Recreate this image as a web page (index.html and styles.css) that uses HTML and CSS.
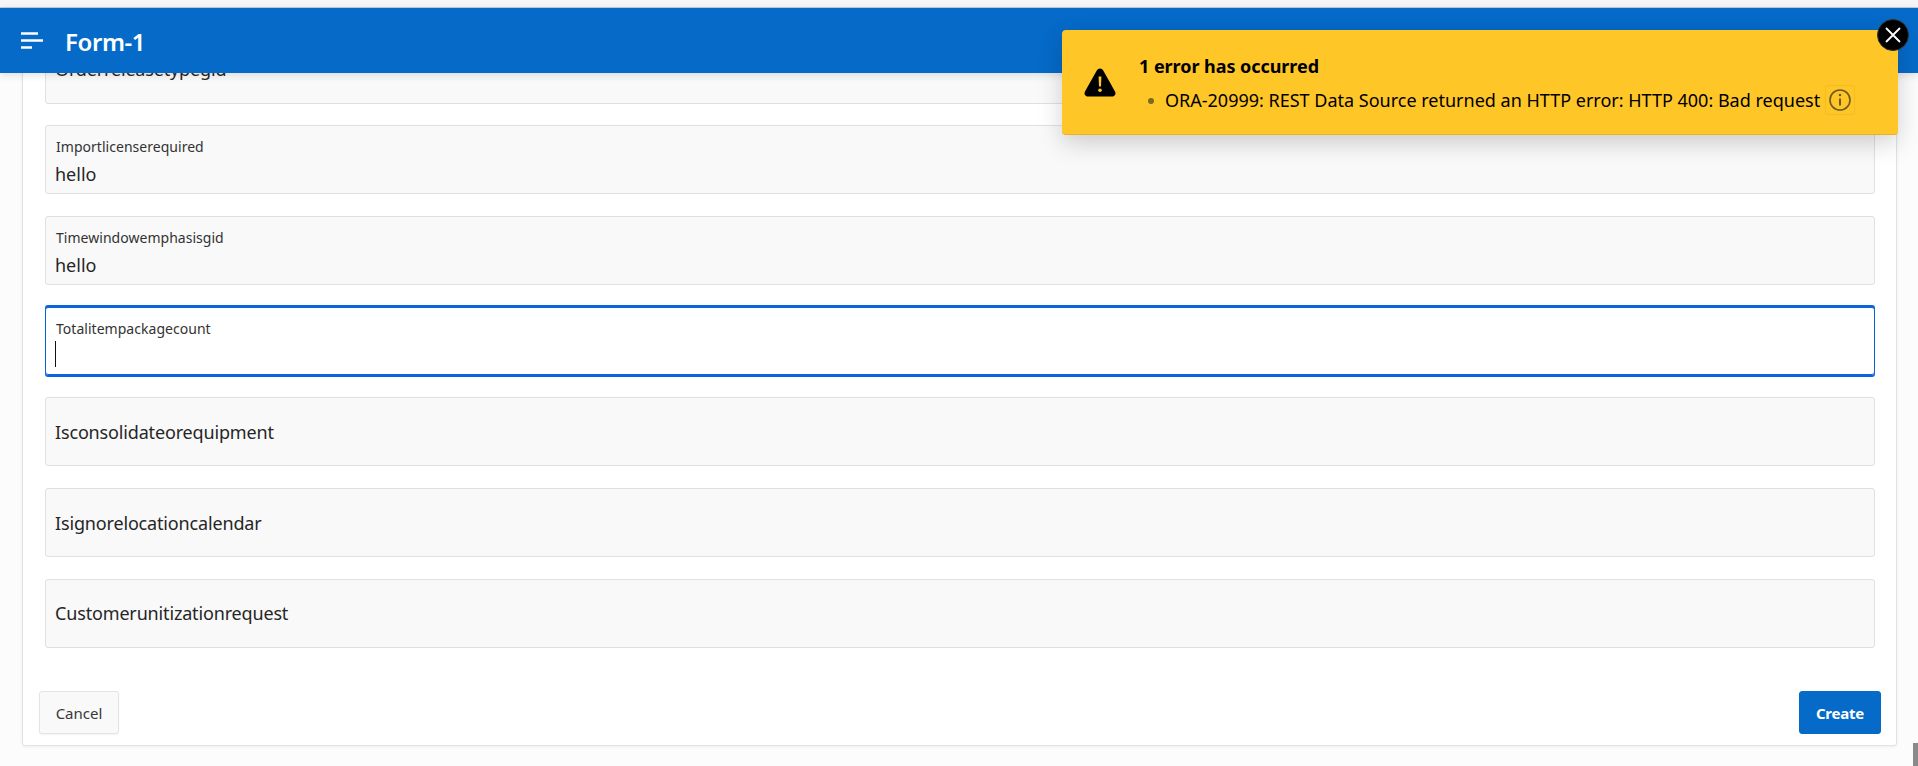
FILE: index.html
```html
<!DOCTYPE html>
<html lang="en">
<head>
<meta charset="utf-8">
<title>Form-1</title>
<link rel="stylesheet" href="styles.css">
</head>
<body>
<div class="strip"></div>
<header class="header">
  <svg class="menu" width="22" height="17" viewBox="0 0 22 17"><path d="M0 1.5h17M0 8.5h22M0 15.500h11" stroke="#fff" stroke-width="2.400" fill="none"/></svg>
  <h1 class="title">Form-1</h1>
</header>
<main class="main">
  <section class="card">
    <div class="fields">
      <div class="field field-empty"><span class="placeholder">Orderreleasetypegid</span></div>
      <div class="field"><span class="label">Importlicenserequired</span><span class="value">hello</span></div>
      <div class="field"><span class="label">Timewindowemphasisgid</span><span class="value">hello</span></div>
      <div class="field field-focus"><span class="label">Totalitempackagecount</span><span class="caret"></span></div>
      <div class="field field-empty"><span class="placeholder">Isconsolidateorequipment</span></div>
      <div class="field field-empty"><span class="placeholder">Isignorelocationcalendar</span></div>
      <div class="field field-empty"><span class="placeholder">Customerunitizationrequest</span></div>
    </div>
    <div class="actions">
      <button class="btn btn-cancel">Cancel</button>
      <button class="btn btn-create">Create</button>
    </div>
  </section>
</main>
<aside class="toast">
  <svg class="warn" width="34" height="32" viewBox="0 0 34 32"><path d="M17 2.500c-1.400 0-2.500.8-3.200 2L2 25.500c-1.300 2.400.2 5 3 5h24c2.800 0 4.300-2.600 3-5L20.200 4.500c-.7-1.200-1.800-2-3.200-2z" fill="#000"/><path d="M15.600 10.500h2.800l-.4 10h-2z" fill="#ffc628"/><circle cx="17" cy="24.300" r="1.800" fill="#ffc628"/></svg>
  <div class="toast-body">
    <h2 class="toast-title">1 error has occurred</h2>
    <ul class="toast-list">
      <li class="toast-item">ORA-20999: REST Data Source returned an HTTP error: HTTP 400: Bad request
        <span class="info"><svg width="24" height="24" viewBox="0 0 24 24" fill="none"><circle cx="12" cy="12" r="10" stroke="#6e5a1e" stroke-width="1.600"/><path d="M12 10.500v7" stroke="#6e5a1e" stroke-width="2"/><circle cx="12" cy="7" r="1.300" fill="#6e5a1e"/></svg></span>
      </li>
    </ul>
  </div>
  <button class="close" aria-label="Close"><svg width="18" height="18" viewBox="0 0 18 18"><path d="M2 2l14 14M16 2L2 16" stroke="#fff" stroke-width="1.800"/></svg></button>
</aside>
<div class="scroll-thumb"></div>
</body>
</html>
```

FILE: styles.css
```css
* { box-sizing: border-box; }
html, body { margin: 0; height: 766px; overflow: hidden; }
body {
  background: #fcfcfc;
  font-family: "Noto Sans", "Open Sans", sans-serif;
  color: #262626;
  position: relative;
}
.strip { height: 8px; background: #f6f6f9; border-bottom: 1px solid #c9ccd4; }
.header {
  position: relative;
  z-index: 2;
  height: 65px;
  background: #056ac8;
  display: flex;
  align-items: center;
  padding-left: 21px;
  color: #fff;
  box-shadow: 0 2px 8px rgba(0,0,0,.12);
}
.menu { flex: none; }
.title { margin: 2px 0 0 22px; font-size: 24px; font-weight: 600; letter-spacing: -.4px; }
.main { height: 693px; overflow: hidden; padding: 0 21px 0 22px; }
.card {
  margin-top: -39.4px;
  height: 712.4px;
  background: #fff;
  border: 1px solid #e2e2e2;
  border-radius: 3px;
  box-shadow: 0 1px 3px rgba(0,0,0,.06);
  padding: 0 21px 0 22px;
  display: flex;
  flex-direction: column;
}
.fields { display: flex; flex-direction: column; gap: 21.7px; }
.field {
  height: 69px;
  flex: none;
  background: #f9f9f9;
  border: 1px solid #e0e0e0;
  border-radius: 3px;
  padding: 0 9px;
  display: flex;
  flex-direction: column;
}
.field-empty { justify-content: center; }
.field-focus { background: #fff; box-shadow: 0 -2px 0 #0b63dd, 0 1px 0 #0b63dd, inset 0 -1px 0 #0b63dd; border-color: #0b63dd; }
.label { font-size: 14px; line-height: 18px; margin: 12px 0 0 1px; color: #333; letter-spacing: .03px; }
.value { font-size: 18px; line-height: 26px; margin-top: 5px; letter-spacing: 0; }
.placeholder { font-size: 18px; line-height: 26px; letter-spacing: -.16px; }
.caret { width: 1px; height: 26px; background: #111; margin-top: 3px; }
.actions { display: flex; justify-content: space-between; margin: 43.200px -6px 0 -6px; }
.btn {
  height: 43px;
  border-radius: 3px;
  font: inherit;
  font-size: 15px;
  padding: 2px 0 0;
  border: 1px solid #e4e4e4;
}
.btn-cancel { width: 80px; background: #f9f9f9; color: #383838; box-shadow: 0 1px 2px rgba(0,0,0,.05); }
.btn-create { width: 82px; background: #056ac8; border-color: #056ac8; color: #fff; font-weight: 700; letter-spacing: -.2px; }
.toast {
  position: absolute;
  z-index: 3;
  left: 1062px;
  top: 30px;
  width: 836px;
  height: 105px;
  background: #ffc628;
  border-bottom: 1px solid #e9b21f;
  border-radius: 4px;
  box-shadow: 0 8px 24px rgba(0,0,0,.18);
  display: flex;
  padding: 23px 0 0 21px;
  color: #000;
}
.warn { flex: none; margin-top: 13px; }
.toast-body { margin-left: 22px; }
.toast-title { margin: 0; font-size: 18px; line-height: 26px; font-weight: 700; letter-spacing: -.05px; }
.toast-list { margin: 6px 0 0; padding: 0 0 0 26px; list-style: none; }
.toast-item { font-size: 18px; line-height: 30px; letter-spacing: 0; }
.toast-item::before {
  content: "";
  display: inline-block;
  width: 6px;
  height: 6px;
  border-radius: 50%;
  background: #7a6a20;
  margin: 0 11px 3px -17px;
  vertical-align: middle;
}
.info {
  display: inline-flex;
  width: 30px;
  height: 30px;
  vertical-align: top;
  align-items: center;
  justify-content: center;
  border: 1px solid #f4bb22;
  border-radius: 3px;
}
.close {
  position: absolute;
  right: -11px;
  top: -11px;
  width: 32px;
  height: 32px;
  border-radius: 50%;
  background: #000;
  border: 1px solid #333;
  padding: 0;
  display: flex;
  align-items: center;
  justify-content: center;
}
.scroll-thumb { position: absolute; right: 0; bottom: 0; width: 5px; height: 23px; background: #8a8a8a; }
```
